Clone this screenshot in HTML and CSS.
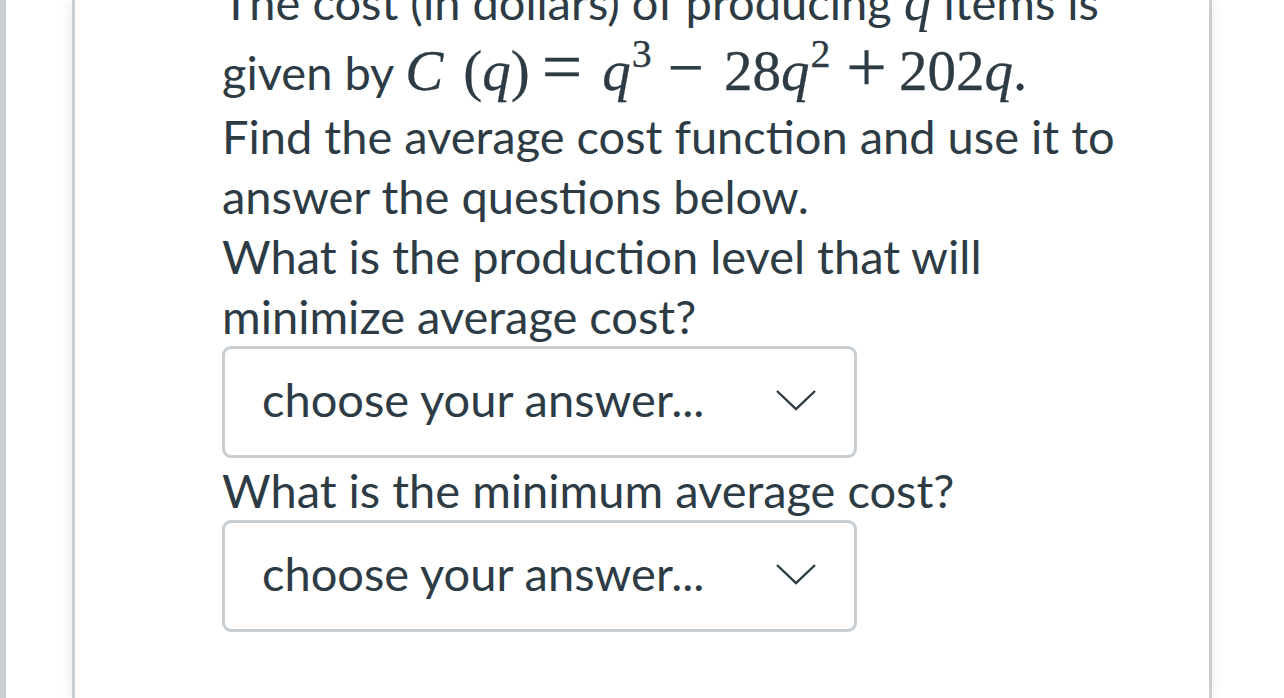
FILE: index.html
```html
<!DOCTYPE html>
<html>
<head>
<meta charset="utf-8">
<link rel="stylesheet" href="styles.css">
</head>
<body>
<div class="page">
  <div class="rail"></div>
  <div class="gutter"></div>
  <div class="card">
    <div class="content">
      <p class="line">The cost (in dollars) of producing <span class="mi">q</span> items is</p>
      <p class="line math-line">given by <span class="math"><span class="mi">C</span><span class="mo open">(</span><span class="mi">q</span><span class="mo">)</span><span class="op rel">=</span><span class="mi">q</span><sup class="sup">3</sup><span class="op minus">−</span><span class="mn">28</span><span class="mi">q</span><sup class="sup">2</sup><span class="op plus">+</span><span class="mn">202</span><span class="mi">q</span><span class="mn">.</span></span></p>
      <p class="line">Find the average cost function and use it to answer the questions below.</p>
      <p class="line">What is the production level that will minimize average cost?</p>
      <div class="select">
        <span class="select-text">choose your answer...</span>
        <svg class="chev" width="42" height="24" viewBox="0 0 42 24"><polyline points="2,3 21,21 40,3" fill="none" stroke="#2d3b45" stroke-width="2.4"/></svg>
      </div>
      <p class="line">What is the minimum average cost?</p>
      <div class="select">
        <span class="select-text">choose your answer...</span>
        <svg class="chev" width="42" height="24" viewBox="0 0 42 24"><polyline points="2,3 21,21 40,3" fill="none" stroke="#2d3b45" stroke-width="2.4"/></svg>
      </div>
    </div>
  </div>
</div>
</body>
</html>
```
FILE: styles.css
```css
html, body {
  margin: 0;
  padding: 0;
  background: #ffffff;
  overflow: hidden;
}
.page {
  display: flex;
  height: 698px;
  width: 1284px;
  font-family: Lato, "Open Sans", sans-serif;
  color: #2d3b45;
}
.rail {
  width: 6px;
  background: #c7cdd1;
  flex: none;
}
.gutter {
  width: 66px;
  flex: none;
}
.card {
  width: 1134px;
  flex: none;
  border-left: 3px solid #c9ced2;
  border-right: 3px solid #c9ced2;
  box-shadow: 0 0 12px rgba(0, 0, 0, 0.10);
  background: #fff;
  overflow: hidden;
}
.content {
  margin-top: -28px;
  padding-left: 147px;
  padding-right: 84px;
  font-size: 47px;
  line-height: 60px;
}
.line {
  margin: 0;
}
.math-line {
  padding-top: 10px;
  padding-bottom: 4px;
}
.math {
  font-family: "Liberation Serif", "Times New Roman", serif;
  font-size: 57px;
  line-height: 0;
  -webkit-text-stroke: 0.3px #2d3b45;
}
.mi {
  font-family: "Liberation Serif", "Times New Roman", serif;
  font-style: italic;
  font-size: 1.18em;
}
.math .mi { font-size: 1em; }
.open { margin-left: 20px; }
.op {
  font-size: 72px;
  line-height: 0;
  vertical-align: -1px;
}
.rel { margin: 0 20px 0 12px; }
.op.minus { font-size: 64px; margin: 0 20px 0 16px; vertical-align: 1px; }
.plus { margin: 0 12px 0 16px; }
.sup {
  font-size: 0.7em;
  vertical-align: 0;
  position: relative;
  top: -0.58em;
  line-height: 0;
  margin-left: 1px;
}
.select {
  box-sizing: border-box;
  width: 635px;
  height: 112px;
  margin: 0 0 2px 0;
  border: 3px solid #c7cdd1;
  border-radius: 9px;
  display: flex;
  align-items: center;
  justify-content: space-between;
  padding: 0 37px 0 37px;
}
.select-text {
  font-size: 47px;
  line-height: 60px;
  padding-bottom: 6px;
}
.chev {
  display: block;
  margin-top: -4px;
}
```
